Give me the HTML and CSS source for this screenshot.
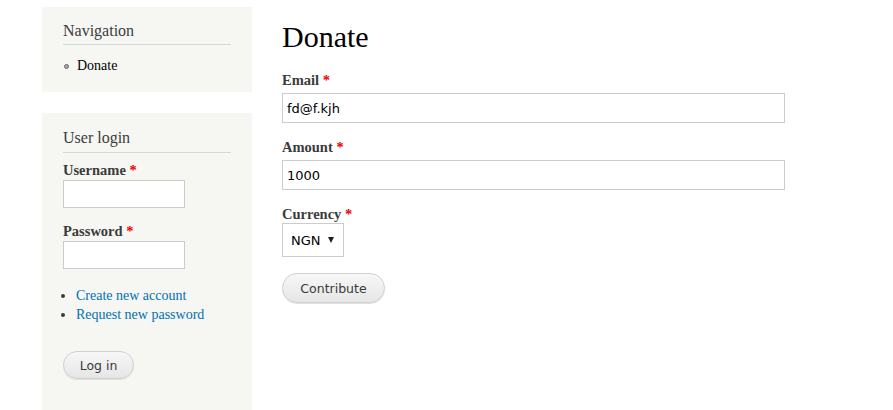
FILE: index.html
```html
<!DOCTYPE html>
<html>
<head>
<meta charset="utf-8">
<link rel="stylesheet" href="styles.css">
</head>
<body>
<div class="page">
  <aside class="sidebar">
    <section class="block block-nav">
      <h2 class="block-title">Navigation</h2>
      <ul class="menu">
        <li><a href="#">Donate</a></li>
      </ul>
    </section>
    <section class="block block-login">
      <h2 class="block-title">User login</h2>
      <div class="field">
        <label class="label">Username <span class="req">*</span></label>
        <input class="input input-small" type="text">
      </div>
      <div class="field">
        <label class="label">Password <span class="req">*</span></label>
        <input class="input input-small" type="password">
      </div>
      <ul class="links">
        <li><a href="#">Create new account</a></li>
        <li><a href="#">Request new password</a></li>
      </ul>
      <button class="btn btn-login">Log in</button>
    </section>
  </aside>
  <main class="main">
    <h1 class="title">Donate</h1>
    <div class="field">
      <label class="label">Email <span class="req">*</span></label>
      <input class="input input-wide" type="text" value="fd@f.kjh">
    </div>
    <div class="field">
      <label class="label">Amount <span class="req">*</span></label>
      <input class="input input-wide" type="text" value="1000">
    </div>
    <div class="field field-select">
      <label class="label">Currency <span class="req">*</span></label>
      <div class="select-wrap"><select class="select"><option>NGN</option></select></div>
    </div>
    <button class="btn btn-contribute">Contribute</button>
  </main>
</div>
</body>
</html>
```

FILE: styles.css
```css
html, body {
  margin: 0;
  padding: 0;
  background: #fff;
}
body {
  font-family: "Liberation Serif", "DejaVu Serif", serif;
  color: #3b3b3b;
  font-size: 14px;
}
.page {
  display: flex;
  align-items: flex-start;
  padding-left: 42px;
  padding-top: 7px;
}
.sidebar {
  width: 210px;
  flex: none;
  display: flex;
  flex-direction: column;
  gap: 21px;
}
.block {
  background: #f6f6f2;
  padding: 15px 21px 0 21px;
  box-sizing: border-box;
}
.block-nav {
  height: 85px;
  padding-top: 14px;
}
.block-login {
  height: 300px;
  padding-top: 15px;
}
.block-title {
  margin: 0;
  font-weight: normal;
  font-size: 16px;
  line-height: 20px;
  padding-bottom: 3px;
  border-bottom: 1px solid #d6d6d6;
  color: #3b3b3b;
}
.block-login .block-title {
  padding-bottom: 4px;
  margin-bottom: 8px;
}
.menu {
  list-style: none;
  margin: 12px 0 0 0;
  padding: 0;
  font-size: 14px;
  line-height: 18px;
}
.menu li {
  display: flex;
  align-items: center;
  gap: 8px;
}
.menu li::before {
  content: "";
  width: 3px;
  height: 3px;
  margin-left: 1px;
  border: 1.5px solid #666;
  border-radius: 50%;
  background: #aaa;
}
.menu a {
  color: #000;
  text-decoration: none;
}
.field {
  display: flex;
  flex-direction: column;
  align-items: flex-start;
}
.label {
  font-weight: bold;
  font-size: 14.5px;
  line-height: 18px;
  color: #3b3b3b;
}
.req {
  color: #e00;
}
.block-login .label {
  margin-bottom: 1px;
}
.block-login .field + .field {
  margin-top: 14px;
}
.input {
  box-sizing: border-box;
  border: 1px solid #ccc;
  background: #fff;
  font-family: "DejaVu Sans", Verdana, sans-serif;
  font-size: 13px;
  color: #000;
  padding: 0 4px;
  margin: 0;
  outline: none;
}
.input-small {
  width: 122px;
  height: 28px;
}
.links {
  margin: 17px 0 0 0;
  padding: 0 0 0 13px;
  list-style: disc;
  font-size: 14px;
  line-height: 19px;
}
.links li::marker {
  color: #3b3b3b;
}
.links a {
  color: #0071b3;
  text-decoration: none;
}
.btn {
  display: block;
  font-family: "DejaVu Sans", Verdana, sans-serif;
  font-size: 12.5px;
  color: #3a3a3a;
  border: 1px solid #d0d0d0;
  border-radius: 15px;
  background: linear-gradient(#f7f7f7, #e6e6e6);
  height: 30px;
  padding: 0;
  box-shadow: 0 1px 0 #e0e0e0;
}
.btn-login {
  margin-top: 27px;
  width: 71px;
  height: 28px;
}
.main {
  margin-left: 30px;
  display: flex;
  flex-direction: column;
  align-items: flex-start;
}
.title {
  margin: 12px 0 0 0;
  font-weight: normal;
  font-size: 30px;
  line-height: 36px;
  color: #000;
}
.main .field {
  margin-top: 16px;
}
.main .field + .field {
  margin-top: 15px;
}
.main .label {
  margin-bottom: 4px;
}
.main .field-select .label {
  margin-bottom: 0;
}
.input-wide {
  width: 503px;
  height: 30px;
}
.select-wrap {
  position: relative;
  display: flex;
}
.select {
  appearance: none;
  -webkit-appearance: none;
  box-sizing: border-box;
  width: 62px;
  height: 34px;
  border: 1px solid #ccc;
  background: #fff;
  border-radius: 0;
  font-family: "DejaVu Sans", Verdana, sans-serif;
  font-size: 13px;
  color: #000;
  padding: 0 0 0 8px;
  margin: 0;
}
.select-wrap::after {
  content: "";
  position: absolute;
  right: 10px;
  top: 14px;
  border-left: 3.5px solid transparent;
  border-right: 3.5px solid transparent;
  border-top: 6px solid #222;
  pointer-events: none;
}
.btn-contribute {
  margin-top: 16px;
  width: 103px;
}
```
